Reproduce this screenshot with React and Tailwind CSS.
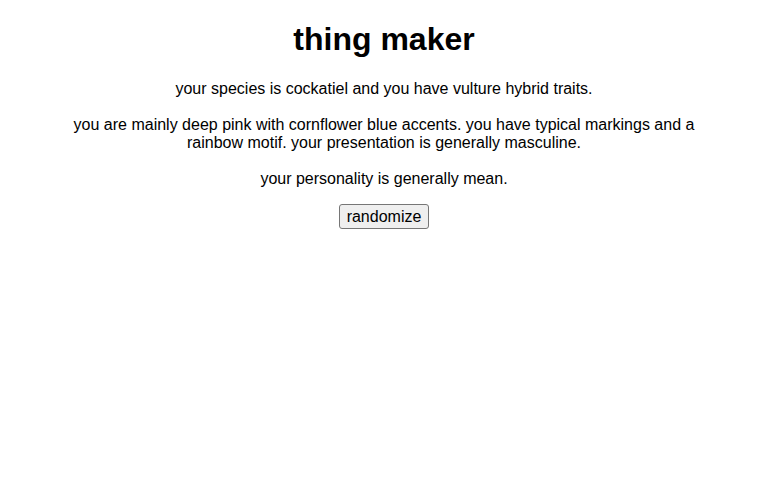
export default function App() {
  return (
    <div className="min-h-screen bg-white text-black text-center font-['Liberation_Sans',Arial,sans-serif] text-[16px] leading-[18px] px-2">
      <h1 className="text-[32px] leading-[37px] font-bold my-[21.44px]">thing maker</h1>
      <p className="my-[18px]">your species is cockatiel and you have vulture hybrid traits.</p>
      <p className="my-[18px] max-w-[640px] mx-auto">
        you are mainly deep pink with cornflower blue accents. you have typical markings and a rainbow motif. your presentation is generally masculine.
      </p>
      <p className="mt-[18px] mb-4">your personality is generally mean.</p>
      <button className="bg-[#efefef] border border-[#767676] rounded-[3px] px-[7px] py-[2px] text-[16px] leading-[19px] text-black">
        randomize
      </button>
    </div>
  );
}
